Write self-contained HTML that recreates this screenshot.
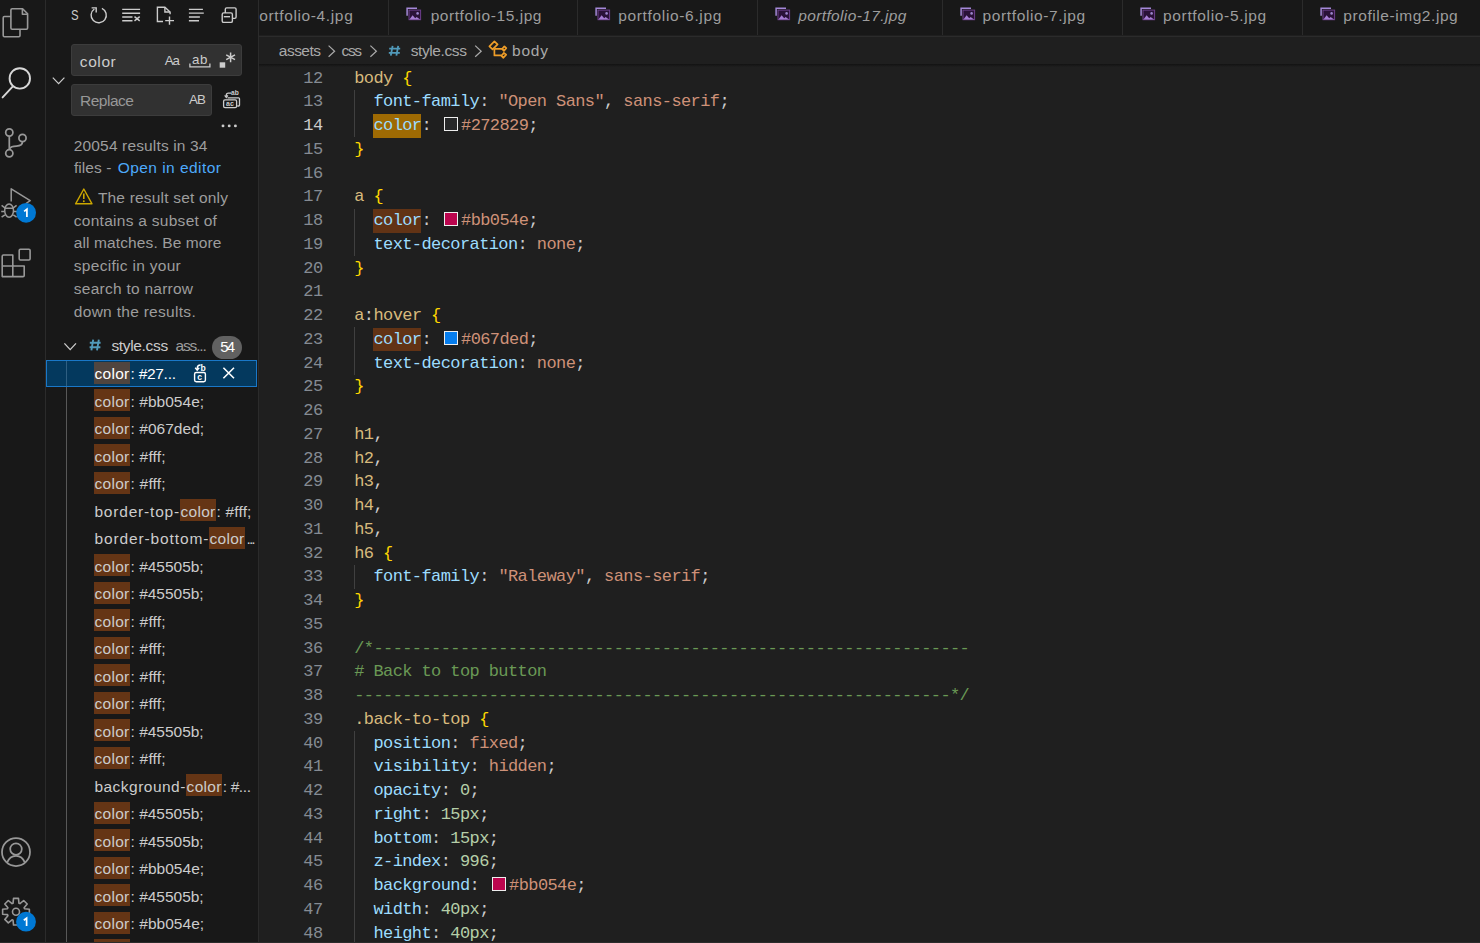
<!DOCTYPE html>
<html><head><meta charset="utf-8"><title>VS Code</title>
<style>
*{box-sizing:border-box;margin:0;padding:0}
html,body{width:1480px;height:943px;overflow:hidden;background:#1f1f1f}
body{position:relative;font-family:"Liberation Sans", sans-serif;color:#cccccc}
.a{position:absolute}
.t{position:absolute;white-space:pre;line-height:1}
.m{font-family:"Liberation Mono", monospace;font-size:17px;letter-spacing:-0.5917px}
svg{position:absolute;overflow:visible}
</style></head><body>

<div class="a" style="left:0;top:0;width:45px;height:943px;background:#181818"></div>
<div class="a" style="left:45px;top:0;width:1px;height:943px;background:#2b2b2b"></div>
<div class="a" style="left:46px;top:0;width:212px;height:943px;background:#181818"></div>
<div class="a" style="left:258px;top:0;width:1px;height:943px;background:#2b2b2b"></div>
<div class="a" style="left:259px;top:0;width:1221px;height:35px;background:#181818"></div>
<div class="a" style="left:259px;top:35.5px;width:1221px;height:1.2px;background:#2b2b2b"></div>
<div class="a" style="left:259px;top:36.7px;width:1221px;height:27.3px;background:#1f1f1f"></div>
<div class="a" style="left:259px;top:64px;width:1221px;height:3px;background:linear-gradient(#121212,#1f1f1f)"></div>
<svg width="46" height="943" style="left:0;top:0">
<g fill="none" stroke="#989898" stroke-width="1.6" stroke-linejoin="round">
  <path d="M10.9 16.5 H4.4 Q3.2 16.5 3.2 17.7 V35.6 Q3.2 36.8 4.4 36.8 H18.8 Q20 36.8 20 35.6 V29.4"/>
  <path d="M10.9 10 Q10.9 8.8 12.1 8.8 H22.6 L27.6 13.8 V28 Q27.6 29.2 26.4 29.2 H12.1 Q10.9 29.2 10.9 28 Z"/>
  <path d="M22.4 9 V14.2 H27.4"/>
</g>
<g fill="none" stroke="#d7d7d7" stroke-width="1.9">
  <circle cx="19.8" cy="78.4" r="10.2"/>
  <path d="M12.6 86.6 L2.6 97.4" stroke-linecap="round"/>
</g>
<g fill="none" stroke="#989898" stroke-width="1.75">
  <circle cx="9.3" cy="132.5" r="3.6"/>
  <circle cx="9.3" cy="153.3" r="3.6"/>
  <circle cx="22.5" cy="138" r="3.6"/>
  <path d="M9.3 136.1 V149.7"/>
  <path d="M22.5 141.6 Q22.5 146 16.5 146.1 Q11 146.2 9.5 148.8"/>
</g>
<g fill="none" stroke="#989898" stroke-width="1.5" stroke-linejoin="round">
  <path d="M11.2 201.4 V188.8 L30.2 200.6 L26 203.5"/>
  <ellipse cx="9.1" cy="210.6" rx="4.4" ry="6.6"/>
  <path d="M4.8 208.2 H13.4 M1.6 205.4 L4.9 207.8 M16.6 205.4 L13.3 207.8 M1.2 211.6 H4.7 M13.5 211.6 H17 M1.6 217.2 L4.9 214.8 M16.6 217.2 L13.3 214.8"/>
</g>
<circle cx="26.1" cy="212.8" r="9.9" fill="#0078d4"/>
<g fill="none" stroke="#989898" stroke-width="1.6" stroke-linejoin="round">
  <path d="M2.2 276.6 V256.2 Q2.2 255 3.4 255 H12.8 V266 H24.2 V275.4 Q24.2 276.6 23 276.6 H3.4 Q2.2 276.6 2.2 275.4 Z"/>
  <path d="M2.2 266 H12.8 V276.6"/>
  <rect x="19.2" y="249.2" width="10.9" height="10.8" rx="1.2"/>
</g>
<g fill="none" stroke="#989898" stroke-width="1.75">
  <circle cx="16" cy="852" r="14"/>
  <circle cx="16" cy="849.1" r="5.8"/>
  <path d="M7.2 862.4 Q9.8 855.8 16 855.8 Q22.2 855.8 24.8 862.4"/>
</g>
<g fill="none" stroke="#989898" stroke-width="1.6" stroke-linejoin="round">
  <path d="M13.07 903.19 L13.52 898.33 L18.48 898.33 L18.93 903.19 L19.95 903.61 L23.70 900.49 L27.21 904.00 L24.09 907.75 L24.51 908.77 L29.37 909.22 L29.37 914.18 L24.51 914.63 L24.09 915.65 L27.21 919.40 L23.70 922.91 L19.95 919.79 L18.93 920.21 L18.48 925.07 L13.52 925.07 L13.07 920.21 L12.05 919.79 L8.30 922.91 L4.79 919.40 L7.91 915.65 L7.49 914.63 L2.63 914.18 L2.63 909.22 L7.49 908.77 L7.91 907.75 L4.79 904.00 L8.30 900.49 L12.05 903.61 Z"/>
  <circle cx="16" cy="911.7" r="3.5"/>
</g>
<circle cx="26" cy="921.7" r="9.9" fill="#0078d4"/>
</svg>
<svg width="46" height="943" style="left:0;top:0"><path d="M26.9 217 V209.3 L24.1 211.4" fill="none" stroke="#ffffff" stroke-width="1.7" stroke-linejoin="miter"/></svg>
<svg width="46" height="943" style="left:0;top:0"><path d="M26.6 925.9 V918.2 L23.8 920.3" fill="none" stroke="#ffffff" stroke-width="1.7" stroke-linejoin="miter"/></svg>
<div class="t" style="left:70.6px;top:7.6px;font-size:14.6px;color:#cccccc;transform:scaleX(0.78);transform-origin:0 0">S</div>
<svg width="260" height="40" style="left:0;top:0">
<g fill="none" stroke="#cccccc" stroke-width="1.4" stroke-linecap="butt">
  <path d="M94.34 8.97 A7.6 7.6 0 1 0 101.9 8.31"/>
  <path d="M91.6 7.9 H96.2 V12.5" stroke-linejoin="miter"/>
  <path d="M122.2 9.4 H140.1 M122.2 13.2 H140.1 M122.2 17 H132.5 M122.2 20.7 H132.5 M134.5 16.6 L139.7 20.9 M139.7 16.6 L134.5 20.9"/>
  <path d="M163 21.5 H157.4 V7.2 H164.9 L170.1 12 V14.2"/>
  <path d="M164.9 7.4 V12 H170"/>
  <path d="M169.5 16.6 V24.8 M165.2 20.6 H174"/>
  <path d="M188.9 9.4 H202.9 M188.9 13.1 H203.8 M188.9 17 H199.9 M188.9 20.7 H199"/>
  <rect x="222.2" y="12.9" width="10.2" height="9.5" rx="1.5"/>
  <path d="M225.3 12.9 V9.3 Q225.3 7.9 226.7 7.9 H234.7 Q236.1 7.9 236.1 9.3 V17 Q236.1 18.4 234.7 18.4 H232.4"/>
  <path d="M223.8 16.7 H230"/>
</g>
</svg>
<div class="a" style="left:71px;top:44px;width:171px;height:32px;background:#313131;border:1px solid #3c3c3c;border-radius:3px"></div>
<div class="a" style="left:71px;top:84px;width:141px;height:32px;background:#313131;border:1px solid #3c3c3c;border-radius:3px"></div>
<div class="t" style="left:79.80px;top:54.08px;font-size:15.5px;color:#cccccc;letter-spacing:0.591px">color</div>
<div class="t" style="left:80.00px;top:93.28px;font-size:15.5px;color:#989898;letter-spacing:-0.481px">Replace</div>
<div class="t" style="left:164.80px;top:53.64px;font-size:13.3px;color:#cccccc;letter-spacing:-1.093px">Aa</div>
<div class="t" style="left:192.00px;top:52.64px;font-size:13.3px;color:#cccccc;letter-spacing:0.537px">ab</div>
<div class="t" style="left:189.10px;top:92.64px;font-size:13.3px;color:#cccccc;letter-spacing:-1.056px">AB</div>
<svg width="260" height="140" style="left:0;top:0">
<g fill="none" stroke="#cccccc" stroke-width="1.3">
  <path d="M189.9 63.4 V66.8 H209.9 V63.4"/>
  <path d="M52.8 77.6 L58.6 83.6 L64.4 77.6" stroke-width="1.2"/>
</g>
<rect x="219.7" y="62.3" width="5.5" height="5.4" fill="#cccccc"/>
<g stroke="#cccccc" stroke-width="1.5"><path d="M230.6 52.4 V62.2 M226.2 54.9 L235 59.7 M235 54.9 L226.2 59.7"/></g>
<g fill="none" stroke="#cccccc" stroke-width="1.3">
  <path d="M227.6 97.9 H238.6 Q239.5 97.9 239.5 98.8 V105.2 Q239.5 106 238.6 106 H237.2"/>
  <rect x="223.6" y="99.9" width="13" height="7.8" rx="1.4"/>
  <path d="M231 93.2 H228.4 Q226.3 93.2 226.3 95.3 V96.6"/>
  <path d="M224.7 95.4 L226.3 97.4 L227.9 95.4"/>
</g>
<text x="231" y="95.4" font-family="Liberation Sans" font-size="6.6" font-weight="bold" fill="#cccccc">ab</text>
<text x="226" y="106.3" font-family="Liberation Sans" font-size="7" font-weight="bold" fill="#cccccc">ac</text>
<g fill="#cccccc"><circle cx="223" cy="125.9" r="1.45"/><circle cx="229.2" cy="125.9" r="1.45"/><circle cx="235.4" cy="125.9" r="1.45"/></g>
</svg>
<div class="t" style="left:73.80px;top:137.88px;font-size:15.5px;color:#9d9d9d;letter-spacing:0.151px">20054 results in 34</div>
<div class="t" style="left:74.00px;top:160.48px;font-size:15.5px;color:#9d9d9d;letter-spacing:0.059px">files -</div>
<div class="t" style="left:117.70px;top:160.48px;font-size:15.5px;color:#4daafc;letter-spacing:0.458px">Open in editor</div>
<div class="t" style="left:97.90px;top:190.38px;font-size:15.5px;color:#9d9d9d;letter-spacing:0.192px">The result set only</div>
<div class="t" style="left:73.80px;top:212.78px;font-size:15.5px;color:#9d9d9d;letter-spacing:0.275px">contains a subset of</div>
<div class="t" style="left:73.80px;top:235.48px;font-size:15.5px;color:#9d9d9d;letter-spacing:0.109px">all matches. Be more</div>
<div class="t" style="left:73.80px;top:258.28px;font-size:15.5px;color:#9d9d9d;letter-spacing:0.298px">specific in your</div>
<div class="t" style="left:73.80px;top:281.08px;font-size:15.5px;color:#9d9d9d;letter-spacing:0.255px">search to narrow</div>
<div class="t" style="left:73.80px;top:303.78px;font-size:15.5px;color:#9d9d9d;letter-spacing:0.295px">down the results.</div>
<svg width="100" height="220" style="left:0;top:0">
<g fill="none" stroke="#cca700" stroke-width="1.4" stroke-linejoin="round">
  <path d="M83.8 189 L75.6 203.8 H92 Z"/>
</g>
<path d="M83.8 193.6 V199" stroke="#cca700" stroke-width="1.6"/>
<circle cx="83.8" cy="201.2" r="0.95" fill="#cca700"/>
</svg>
<svg width="260" height="400" style="left:0;top:0">
<path d="M64.4 343.4 L70.2 349.6 L76 343.4" fill="none" stroke="#cccccc" stroke-width="1.3"/>
<g stroke="#519aba" stroke-width="1.9" fill="none">
  <path d="M93.2 339.6 L91.4 350.4 M98.8 339.6 L97 350.4 M89.8 342.8 H100.6 M89.6 347.2 H100.4"/>
</g>
</svg>
<div class="t" style="left:111.40px;top:338.48px;font-size:15.5px;color:#cccccc;letter-spacing:-0.330px">style.css</div>
<div class="t" style="left:175.60px;top:338.48px;font-size:15.5px;color:#9d9d9d;letter-spacing:-1.189px">ass...</div>
<div class="a" style="left:212px;top:336px;width:30px;height:23px;border-radius:11.5px;background:#616161"></div>
<div class="t" style="left:220.20px;top:338.90px;font-size:15px;color:#ffffff;letter-spacing:-1.850px">54</div>
<div class="a" style="left:66px;top:386px;width:1px;height:557px;background:#585858"></div>
<div class="a" style="left:46px;top:360px;width:211.4px;height:27px;background:#04395e;border:1px solid #1a78c8"></div>
<div class="a" style="left:66px;top:361px;width:1px;height:25px;background:#2f5f82"></div>
<div class="a" style="left:94.00px;top:361.60px;width:35.8px;height:22px;background:#50453f"></div>
<div class="t" style="left:94.40px;top:366.28px;font-size:15.5px;color:#ffffff;letter-spacing:0.316px">color</div>
<div class="t" style="left:130.60px;top:366.28px;font-size:15.5px;color:#ffffff;letter-spacing:-0.290px">: #27...</div>
<div class="a" style="left:94.00px;top:389.10px;width:35.8px;height:22px;background:#653515"></div>
<div class="t" style="left:94.40px;top:393.78px;font-size:15.5px;color:#cccccc;letter-spacing:0.316px">color</div>
<div class="t" style="left:130.60px;top:393.78px;font-size:15.5px;color:#cccccc;letter-spacing:0.029px">: #bb054e;</div>
<div class="a" style="left:94.00px;top:416.60px;width:35.8px;height:22px;background:#653515"></div>
<div class="t" style="left:94.40px;top:421.28px;font-size:15.5px;color:#cccccc;letter-spacing:0.316px">color</div>
<div class="t" style="left:130.60px;top:421.28px;font-size:15.5px;color:#cccccc;letter-spacing:0.029px">: #067ded;</div>
<div class="a" style="left:94.00px;top:444.10px;width:35.8px;height:22px;background:#653515"></div>
<div class="t" style="left:94.40px;top:448.78px;font-size:15.5px;color:#cccccc;letter-spacing:0.316px">color</div>
<div class="t" style="left:130.60px;top:448.78px;font-size:15.5px;color:#cccccc;letter-spacing:0.189px">: #fff;</div>
<div class="a" style="left:94.00px;top:471.60px;width:35.8px;height:22px;background:#653515"></div>
<div class="t" style="left:94.40px;top:476.28px;font-size:15.5px;color:#cccccc;letter-spacing:0.316px">color</div>
<div class="t" style="left:130.60px;top:476.28px;font-size:15.5px;color:#cccccc;letter-spacing:0.189px">: #fff;</div>
<div class="a" style="left:180.00px;top:499.10px;width:35.8px;height:22px;background:#653515"></div>
<div class="t" style="left:94.40px;top:503.78px;font-size:15.5px;color:#cccccc;letter-spacing:0.815px">border-top-</div>
<div class="t" style="left:180.40px;top:503.78px;font-size:15.5px;color:#cccccc;letter-spacing:0.316px">color</div>
<div class="t" style="left:216.60px;top:503.78px;font-size:15.5px;color:#cccccc;letter-spacing:0.155px">: #fff;</div>
<div class="a" style="left:209.00px;top:526.60px;width:35.8px;height:22px;background:#653515"></div>
<div class="t" style="left:94.40px;top:531.28px;font-size:15.5px;color:#cccccc;letter-spacing:0.882px">border-bottom-</div>
<div class="t" style="left:209.40px;top:531.28px;font-size:15.5px;color:#cccccc;letter-spacing:0.316px">color</div>
<div class="t" style="left:246.40px;top:531.28px;font-size:15.5px;color:#cccccc;letter-spacing:-1.821px">...</div>
<div class="a" style="left:94.00px;top:554.10px;width:35.8px;height:22px;background:#653515"></div>
<div class="t" style="left:94.40px;top:558.78px;font-size:15.5px;color:#cccccc;letter-spacing:0.316px">color</div>
<div class="t" style="left:130.60px;top:558.78px;font-size:15.5px;color:#cccccc;letter-spacing:-0.026px">: #45505b;</div>
<div class="a" style="left:94.00px;top:581.60px;width:35.8px;height:22px;background:#653515"></div>
<div class="t" style="left:94.40px;top:586.28px;font-size:15.5px;color:#cccccc;letter-spacing:0.316px">color</div>
<div class="t" style="left:130.60px;top:586.28px;font-size:15.5px;color:#cccccc;letter-spacing:-0.026px">: #45505b;</div>
<div class="a" style="left:94.00px;top:609.10px;width:35.8px;height:22px;background:#653515"></div>
<div class="t" style="left:94.40px;top:613.78px;font-size:15.5px;color:#cccccc;letter-spacing:0.316px">color</div>
<div class="t" style="left:130.60px;top:613.78px;font-size:15.5px;color:#cccccc;letter-spacing:0.189px">: #fff;</div>
<div class="a" style="left:94.00px;top:636.60px;width:35.8px;height:22px;background:#653515"></div>
<div class="t" style="left:94.40px;top:641.28px;font-size:15.5px;color:#cccccc;letter-spacing:0.316px">color</div>
<div class="t" style="left:130.60px;top:641.28px;font-size:15.5px;color:#cccccc;letter-spacing:0.189px">: #fff;</div>
<div class="a" style="left:94.00px;top:664.10px;width:35.8px;height:22px;background:#653515"></div>
<div class="t" style="left:94.40px;top:668.78px;font-size:15.5px;color:#cccccc;letter-spacing:0.316px">color</div>
<div class="t" style="left:130.60px;top:668.78px;font-size:15.5px;color:#cccccc;letter-spacing:0.189px">: #fff;</div>
<div class="a" style="left:94.00px;top:691.60px;width:35.8px;height:22px;background:#653515"></div>
<div class="t" style="left:94.40px;top:696.28px;font-size:15.5px;color:#cccccc;letter-spacing:0.316px">color</div>
<div class="t" style="left:130.60px;top:696.28px;font-size:15.5px;color:#cccccc;letter-spacing:0.189px">: #fff;</div>
<div class="a" style="left:94.00px;top:719.10px;width:35.8px;height:22px;background:#653515"></div>
<div class="t" style="left:94.40px;top:723.78px;font-size:15.5px;color:#cccccc;letter-spacing:0.316px">color</div>
<div class="t" style="left:130.60px;top:723.78px;font-size:15.5px;color:#cccccc;letter-spacing:-0.026px">: #45505b;</div>
<div class="a" style="left:94.00px;top:746.60px;width:35.8px;height:22px;background:#653515"></div>
<div class="t" style="left:94.40px;top:751.28px;font-size:15.5px;color:#cccccc;letter-spacing:0.316px">color</div>
<div class="t" style="left:130.60px;top:751.28px;font-size:15.5px;color:#cccccc;letter-spacing:0.189px">: #fff;</div>
<div class="a" style="left:186.20px;top:774.10px;width:35.8px;height:22px;background:#653515"></div>
<div class="t" style="left:94.40px;top:778.78px;font-size:15.5px;color:#cccccc;letter-spacing:0.482px">background-</div>
<div class="t" style="left:186.60px;top:778.78px;font-size:15.5px;color:#cccccc;letter-spacing:0.316px">color</div>
<div class="t" style="left:222.80px;top:778.78px;font-size:15.5px;color:#cccccc;letter-spacing:-0.390px">: #...</div>
<div class="a" style="left:94.00px;top:801.60px;width:35.8px;height:22px;background:#653515"></div>
<div class="t" style="left:94.40px;top:806.28px;font-size:15.5px;color:#cccccc;letter-spacing:0.316px">color</div>
<div class="t" style="left:130.60px;top:806.28px;font-size:15.5px;color:#cccccc;letter-spacing:-0.026px">: #45505b;</div>
<div class="a" style="left:94.00px;top:829.10px;width:35.8px;height:22px;background:#653515"></div>
<div class="t" style="left:94.40px;top:833.78px;font-size:15.5px;color:#cccccc;letter-spacing:0.316px">color</div>
<div class="t" style="left:130.60px;top:833.78px;font-size:15.5px;color:#cccccc;letter-spacing:-0.026px">: #45505b;</div>
<div class="a" style="left:94.00px;top:856.60px;width:35.8px;height:22px;background:#653515"></div>
<div class="t" style="left:94.40px;top:861.28px;font-size:15.5px;color:#cccccc;letter-spacing:0.316px">color</div>
<div class="t" style="left:130.60px;top:861.28px;font-size:15.5px;color:#cccccc;letter-spacing:0.029px">: #bb054e;</div>
<div class="a" style="left:94.00px;top:884.10px;width:35.8px;height:22px;background:#653515"></div>
<div class="t" style="left:94.40px;top:888.78px;font-size:15.5px;color:#cccccc;letter-spacing:0.316px">color</div>
<div class="t" style="left:130.60px;top:888.78px;font-size:15.5px;color:#cccccc;letter-spacing:-0.026px">: #45505b;</div>
<div class="a" style="left:94.00px;top:911.60px;width:35.8px;height:22px;background:#653515"></div>
<div class="t" style="left:94.40px;top:916.28px;font-size:15.5px;color:#cccccc;letter-spacing:0.316px">color</div>
<div class="t" style="left:130.60px;top:916.28px;font-size:15.5px;color:#cccccc;letter-spacing:0.029px">: #bb054e;</div>
<div class="a" style="left:94.00px;top:939.10px;width:35.8px;height:22px;background:#653515"></div>
<div class="t" style="left:94.40px;top:943.78px;font-size:15.5px;color:#cccccc;letter-spacing:0.316px">color</div>
<div class="t" style="left:130.60px;top:943.78px;font-size:15.5px;color:#cccccc;letter-spacing:0.189px">: #fff;</div>
<svg width="260" height="400" style="left:0;top:0">
<g fill="none" stroke="#ffffff" stroke-width="1.4">
  <rect x="194.6" y="372.5" width="10.8" height="9.2" rx="1.6"/>
  <path d="M200.6 365 Q197.2 365 197.2 368.4 V369.6"/>
  <path d="M195.2 367.8 L197.2 370.2 L199.2 367.8"/>
  <path d="M223.4 367.8 L234 378.2 M234 367.8 L223.4 378.2" stroke-width="1.6"/>
</g>
<text x="200.6" y="370.6" font-family="Liberation Sans" font-size="8.6" font-weight="bold" fill="#ffffff">b</text>
<text x="197.2" y="379.6" font-family="Liberation Sans" font-size="8.6" font-weight="bold" fill="#ffffff">c</text>
</svg>
<div class="a" style="left:388.1px;top:0;width:1px;height:35px;background:#2b2b2b"></div>
<div class="a" style="left:577.2px;top:0;width:1px;height:35px;background:#2b2b2b"></div>
<div class="a" style="left:756.9px;top:0;width:1px;height:35px;background:#2b2b2b"></div>
<div class="a" style="left:941.5px;top:0;width:1px;height:35px;background:#2b2b2b"></div>
<div class="a" style="left:1122.1px;top:0;width:1px;height:35px;background:#2b2b2b"></div>
<div class="a" style="left:1301.7px;top:0;width:1px;height:35px;background:#2b2b2b"></div>
<div class="t" style="left:259.20px;top:7.88px;font-size:15.5px;color:#9d9d9d;letter-spacing:0.636px">ortfolio-4.jpg</div>
<div class="t" style="left:430.70px;top:7.88px;font-size:15.5px;color:#9d9d9d;letter-spacing:0.551px">portfolio-15.jpg</div>
<svg width="18" height="16" style="left:406.4px;top:7px">
<path d="M1.1 8.8 V1.3 H11" fill="none" stroke="#a488d8" stroke-width="1.5"/>
<rect x="3" y="3.1" width="11.6" height="9.6" fill="#2a1238" stroke="#6d3f8c" stroke-width="1"/>
<path d="M3.4 12.6 L6.6 8.2 L9.2 11.2 L10.6 9.9 L14.2 12.6 Z" fill="#a77ed4"/>
<circle cx="11.6" cy="6.4" r="1.3" fill="#9c86cc"/>
</svg>
<div class="t" style="left:618.20px;top:7.88px;font-size:15.5px;color:#9d9d9d;letter-spacing:0.662px">portfolio-6.jpg</div>
<svg width="18" height="16" style="left:594.9px;top:7px">
<path d="M1.1 8.8 V1.3 H11" fill="none" stroke="#a488d8" stroke-width="1.5"/>
<rect x="3" y="3.1" width="11.6" height="9.6" fill="#2a1238" stroke="#6d3f8c" stroke-width="1"/>
<path d="M3.4 12.6 L6.6 8.2 L9.2 11.2 L10.6 9.9 L14.2 12.6 Z" fill="#a77ed4"/>
<circle cx="11.6" cy="6.4" r="1.3" fill="#9c86cc"/>
</svg>
<div class="t" style="left:798.19px;top:7.88px;font-size:15.5px;color:#9d9d9d;font-style:italic;letter-spacing:0.372px">portfolio-17.jpg</div>
<svg width="18" height="16" style="left:774.5px;top:7px">
<path d="M1.1 8.8 V1.3 H11" fill="none" stroke="#a488d8" stroke-width="1.5"/>
<rect x="3" y="3.1" width="11.6" height="9.6" fill="#2a1238" stroke="#6d3f8c" stroke-width="1"/>
<path d="M3.4 12.6 L6.6 8.2 L9.2 11.2 L10.6 9.9 L14.2 12.6 Z" fill="#a77ed4"/>
<circle cx="11.6" cy="6.4" r="1.3" fill="#9c86cc"/>
</svg>
<div class="t" style="left:982.50px;top:7.88px;font-size:15.5px;color:#9d9d9d;letter-spacing:0.626px">portfolio-7.jpg</div>
<svg width="18" height="16" style="left:959.5px;top:7px">
<path d="M1.1 8.8 V1.3 H11" fill="none" stroke="#a488d8" stroke-width="1.5"/>
<rect x="3" y="3.1" width="11.6" height="9.6" fill="#2a1238" stroke="#6d3f8c" stroke-width="1"/>
<path d="M3.4 12.6 L6.6 8.2 L9.2 11.2 L10.6 9.9 L14.2 12.6 Z" fill="#a77ed4"/>
<circle cx="11.6" cy="6.4" r="1.3" fill="#9c86cc"/>
</svg>
<div class="t" style="left:1163.00px;top:7.88px;font-size:15.5px;color:#9d9d9d;letter-spacing:0.662px">portfolio-5.jpg</div>
<svg width="18" height="16" style="left:1139.7px;top:7px">
<path d="M1.1 8.8 V1.3 H11" fill="none" stroke="#a488d8" stroke-width="1.5"/>
<rect x="3" y="3.1" width="11.6" height="9.6" fill="#2a1238" stroke="#6d3f8c" stroke-width="1"/>
<path d="M3.4 12.6 L6.6 8.2 L9.2 11.2 L10.6 9.9 L14.2 12.6 Z" fill="#a77ed4"/>
<circle cx="11.6" cy="6.4" r="1.3" fill="#9c86cc"/>
</svg>
<div class="t" style="left:1343.30px;top:7.88px;font-size:15.5px;color:#9d9d9d;letter-spacing:0.564px">profile-img2.jpg</div>
<svg width="18" height="16" style="left:1320.0px;top:7px">
<path d="M1.1 8.8 V1.3 H11" fill="none" stroke="#a488d8" stroke-width="1.5"/>
<rect x="3" y="3.1" width="11.6" height="9.6" fill="#2a1238" stroke="#6d3f8c" stroke-width="1"/>
<path d="M3.4 12.6 L6.6 8.2 L9.2 11.2 L10.6 9.9 L14.2 12.6 Z" fill="#a77ed4"/>
<circle cx="11.6" cy="6.4" r="1.3" fill="#9c86cc"/>
</svg>
<div class="t" style="left:278.80px;top:43.48px;font-size:15.5px;color:#a9a9a9;letter-spacing:-0.519px">assets</div>
<div class="t" style="left:341.50px;top:43.48px;font-size:15.5px;color:#a9a9a9;letter-spacing:-1.325px">css</div>
<div class="t" style="left:410.70px;top:43.48px;font-size:15.5px;color:#a9a9a9;letter-spacing:-0.393px">style.css</div>
<div class="t" style="left:512.00px;top:43.48px;font-size:15.5px;color:#a9a9a9;letter-spacing:0.755px">body</div>
<svg width="560" height="70" style="left:0;top:0">
<g fill="none" stroke="#a9a9a9" stroke-width="1.2">
  <path d="M328.6 45.6 L334.6 51.2 L328.6 56.8"/>
  <path d="M370.4 45.6 L376.4 51.2 L370.4 56.8"/>
  <path d="M475.2 45.6 L481.2 51.2 L475.2 56.8"/>
</g>
<g stroke="#519aba" stroke-width="1.8" fill="none">
  <path d="M392.6 45.8 L390.8 55.6 M398.2 45.8 L396.4 55.6 M389.2 48.6 H400.2 M388.8 52.8 H399.8"/>
</g>
<g fill="none" stroke="#ee9d28" stroke-width="1.7" stroke-linejoin="round">
  <path d="M489.4 46.4 L494.4 41.4 L497.6 44.4 L492.6 49.4 Z"/>
  <path d="M502.2 48.9 L504.4 46.3 L506.3 48.2 L503.9 50.9 Z"/>
  <path d="M501.5 55.8 L503.9 52.9 L506.2 54.6 L503.4 57.8 Z"/>
  <path d="M494.3 48.9 H502 M494.4 49 V55.4 H501.6"/>
</g>
</svg>
<div class="t m" style="left:281px;top:66.70px;width:41.5px;height:23.75px;line-height:23.75px;text-align:right;color:#858b93">12</div>
<div class="t m" style="left:354.2px;top:66.70px;height:23.75px;line-height:23.75px"><span style="color:#d7ba7d">body </span><span style="color:#ffd700">{</span></div>
<div class="t m" style="left:281px;top:90.45px;width:41.5px;height:23.75px;line-height:23.75px;text-align:right;color:#858b93">13</div>
<div class="t m" style="left:354.2px;top:90.45px;height:23.75px;line-height:23.75px"><span style="color:#cccccc">  </span><span style="color:#9cdcfe">font-family</span><span style="color:#cccccc">: </span><span style="color:#ce9178">&quot;Open Sans&quot;</span><span style="color:#cccccc">, </span><span style="color:#ce9178">sans-serif</span><span style="color:#cccccc">;</span></div>
<div class="t m" style="left:281px;top:114.20px;width:41.5px;height:23.75px;line-height:23.75px;text-align:right;color:#cccccc">14</div>
<div class="a" style="left:373.42px;top:113.80px;width:48.05px;height:23.9px;background:#9e6a03"></div>
<div class="a" style="left:444.19px;top:116.80px;width:14.2px;height:14.2px;background:#272829;border:1.4px solid #eeeeee"></div>
<div class="t m" style="left:354.2px;top:114.20px;height:23.75px;line-height:23.75px"><span style="color:#cccccc">  </span><span style="color:#9cdcfe">color</span><span style="color:#cccccc">: </span><span style="display:inline-block;width:20.30px"></span><span style="color:#ce9178">#272829</span><span style="color:#cccccc">;</span></div>
<div class="t m" style="left:281px;top:137.95px;width:41.5px;height:23.75px;line-height:23.75px;text-align:right;color:#858b93">15</div>
<div class="t m" style="left:354.2px;top:137.95px;height:23.75px;line-height:23.75px"><span style="color:#ffd700">}</span></div>
<div class="t m" style="left:281px;top:161.70px;width:41.5px;height:23.75px;line-height:23.75px;text-align:right;color:#858b93">16</div>
<div class="t m" style="left:281px;top:185.45px;width:41.5px;height:23.75px;line-height:23.75px;text-align:right;color:#858b93">17</div>
<div class="t m" style="left:354.2px;top:185.45px;height:23.75px;line-height:23.75px"><span style="color:#d7ba7d">a </span><span style="color:#ffd700">{</span></div>
<div class="t m" style="left:281px;top:209.20px;width:41.5px;height:23.75px;line-height:23.75px;text-align:right;color:#858b93">18</div>
<div class="a" style="left:373.42px;top:208.80px;width:48.05px;height:23.9px;background:#623315"></div>
<div class="a" style="left:444.19px;top:211.80px;width:14.2px;height:14.2px;background:#bb054e;border:1.4px solid #eeeeee"></div>
<div class="t m" style="left:354.2px;top:209.20px;height:23.75px;line-height:23.75px"><span style="color:#cccccc">  </span><span style="color:#9cdcfe">color</span><span style="color:#cccccc">: </span><span style="display:inline-block;width:20.30px"></span><span style="color:#ce9178">#bb054e</span><span style="color:#cccccc">;</span></div>
<div class="t m" style="left:281px;top:232.95px;width:41.5px;height:23.75px;line-height:23.75px;text-align:right;color:#858b93">19</div>
<div class="t m" style="left:354.2px;top:232.95px;height:23.75px;line-height:23.75px"><span style="color:#cccccc">  </span><span style="color:#9cdcfe">text-decoration</span><span style="color:#cccccc">: </span><span style="color:#ce9178">none</span><span style="color:#cccccc">;</span></div>
<div class="t m" style="left:281px;top:256.70px;width:41.5px;height:23.75px;line-height:23.75px;text-align:right;color:#858b93">20</div>
<div class="t m" style="left:354.2px;top:256.70px;height:23.75px;line-height:23.75px"><span style="color:#ffd700">}</span></div>
<div class="t m" style="left:281px;top:280.45px;width:41.5px;height:23.75px;line-height:23.75px;text-align:right;color:#858b93">21</div>
<div class="t m" style="left:281px;top:304.20px;width:41.5px;height:23.75px;line-height:23.75px;text-align:right;color:#858b93">22</div>
<div class="t m" style="left:354.2px;top:304.20px;height:23.75px;line-height:23.75px"><span style="color:#d7ba7d">a</span><span style="color:#cccccc">:</span><span style="color:#d7ba7d">hover </span><span style="color:#ffd700">{</span></div>
<div class="t m" style="left:281px;top:327.95px;width:41.5px;height:23.75px;line-height:23.75px;text-align:right;color:#858b93">23</div>
<div class="a" style="left:373.42px;top:327.55px;width:48.05px;height:23.9px;background:#623315"></div>
<div class="a" style="left:444.19px;top:330.55px;width:14.2px;height:14.2px;background:#067ded;border:1.4px solid #eeeeee"></div>
<div class="t m" style="left:354.2px;top:327.95px;height:23.75px;line-height:23.75px"><span style="color:#cccccc">  </span><span style="color:#9cdcfe">color</span><span style="color:#cccccc">: </span><span style="display:inline-block;width:20.30px"></span><span style="color:#ce9178">#067ded</span><span style="color:#cccccc">;</span></div>
<div class="t m" style="left:281px;top:351.70px;width:41.5px;height:23.75px;line-height:23.75px;text-align:right;color:#858b93">24</div>
<div class="t m" style="left:354.2px;top:351.70px;height:23.75px;line-height:23.75px"><span style="color:#cccccc">  </span><span style="color:#9cdcfe">text-decoration</span><span style="color:#cccccc">: </span><span style="color:#ce9178">none</span><span style="color:#cccccc">;</span></div>
<div class="t m" style="left:281px;top:375.45px;width:41.5px;height:23.75px;line-height:23.75px;text-align:right;color:#858b93">25</div>
<div class="t m" style="left:354.2px;top:375.45px;height:23.75px;line-height:23.75px"><span style="color:#ffd700">}</span></div>
<div class="t m" style="left:281px;top:399.20px;width:41.5px;height:23.75px;line-height:23.75px;text-align:right;color:#858b93">26</div>
<div class="t m" style="left:281px;top:422.95px;width:41.5px;height:23.75px;line-height:23.75px;text-align:right;color:#858b93">27</div>
<div class="t m" style="left:354.2px;top:422.95px;height:23.75px;line-height:23.75px"><span style="color:#d7ba7d">h1</span><span style="color:#cccccc">,</span></div>
<div class="t m" style="left:281px;top:446.70px;width:41.5px;height:23.75px;line-height:23.75px;text-align:right;color:#858b93">28</div>
<div class="t m" style="left:354.2px;top:446.70px;height:23.75px;line-height:23.75px"><span style="color:#d7ba7d">h2</span><span style="color:#cccccc">,</span></div>
<div class="t m" style="left:281px;top:470.45px;width:41.5px;height:23.75px;line-height:23.75px;text-align:right;color:#858b93">29</div>
<div class="t m" style="left:354.2px;top:470.45px;height:23.75px;line-height:23.75px"><span style="color:#d7ba7d">h3</span><span style="color:#cccccc">,</span></div>
<div class="t m" style="left:281px;top:494.20px;width:41.5px;height:23.75px;line-height:23.75px;text-align:right;color:#858b93">30</div>
<div class="t m" style="left:354.2px;top:494.20px;height:23.75px;line-height:23.75px"><span style="color:#d7ba7d">h4</span><span style="color:#cccccc">,</span></div>
<div class="t m" style="left:281px;top:517.95px;width:41.5px;height:23.75px;line-height:23.75px;text-align:right;color:#858b93">31</div>
<div class="t m" style="left:354.2px;top:517.95px;height:23.75px;line-height:23.75px"><span style="color:#d7ba7d">h5</span><span style="color:#cccccc">,</span></div>
<div class="t m" style="left:281px;top:541.70px;width:41.5px;height:23.75px;line-height:23.75px;text-align:right;color:#858b93">32</div>
<div class="t m" style="left:354.2px;top:541.70px;height:23.75px;line-height:23.75px"><span style="color:#d7ba7d">h6 </span><span style="color:#ffd700">{</span></div>
<div class="t m" style="left:281px;top:565.45px;width:41.5px;height:23.75px;line-height:23.75px;text-align:right;color:#858b93">33</div>
<div class="t m" style="left:354.2px;top:565.45px;height:23.75px;line-height:23.75px"><span style="color:#cccccc">  </span><span style="color:#9cdcfe">font-family</span><span style="color:#cccccc">: </span><span style="color:#ce9178">&quot;Raleway&quot;</span><span style="color:#cccccc">, </span><span style="color:#ce9178">sans-serif</span><span style="color:#cccccc">;</span></div>
<div class="t m" style="left:281px;top:589.20px;width:41.5px;height:23.75px;line-height:23.75px;text-align:right;color:#858b93">34</div>
<div class="t m" style="left:354.2px;top:589.20px;height:23.75px;line-height:23.75px"><span style="color:#ffd700">}</span></div>
<div class="t m" style="left:281px;top:612.95px;width:41.5px;height:23.75px;line-height:23.75px;text-align:right;color:#858b93">35</div>
<div class="t m" style="left:281px;top:636.70px;width:41.5px;height:23.75px;line-height:23.75px;text-align:right;color:#858b93">36</div>
<div class="t m" style="left:354.2px;top:636.70px;height:23.75px;line-height:23.75px"><span style="color:#6a9955">/*--------------------------------------------------------------</span></div>
<div class="t m" style="left:281px;top:660.45px;width:41.5px;height:23.75px;line-height:23.75px;text-align:right;color:#858b93">37</div>
<div class="t m" style="left:354.2px;top:660.45px;height:23.75px;line-height:23.75px"><span style="color:#6a9955"># Back to top button</span></div>
<div class="t m" style="left:281px;top:684.20px;width:41.5px;height:23.75px;line-height:23.75px;text-align:right;color:#858b93">38</div>
<div class="t m" style="left:354.2px;top:684.20px;height:23.75px;line-height:23.75px"><span style="color:#6a9955">--------------------------------------------------------------*/</span></div>
<div class="t m" style="left:281px;top:707.95px;width:41.5px;height:23.75px;line-height:23.75px;text-align:right;color:#858b93">39</div>
<div class="t m" style="left:354.2px;top:707.95px;height:23.75px;line-height:23.75px"><span style="color:#d7ba7d">.back-to-top </span><span style="color:#ffd700">{</span></div>
<div class="t m" style="left:281px;top:731.70px;width:41.5px;height:23.75px;line-height:23.75px;text-align:right;color:#858b93">40</div>
<div class="t m" style="left:354.2px;top:731.70px;height:23.75px;line-height:23.75px"><span style="color:#cccccc">  </span><span style="color:#9cdcfe">position</span><span style="color:#cccccc">: </span><span style="color:#ce9178">fixed</span><span style="color:#cccccc">;</span></div>
<div class="t m" style="left:281px;top:755.45px;width:41.5px;height:23.75px;line-height:23.75px;text-align:right;color:#858b93">41</div>
<div class="t m" style="left:354.2px;top:755.45px;height:23.75px;line-height:23.75px"><span style="color:#cccccc">  </span><span style="color:#9cdcfe">visibility</span><span style="color:#cccccc">: </span><span style="color:#ce9178">hidden</span><span style="color:#cccccc">;</span></div>
<div class="t m" style="left:281px;top:779.20px;width:41.5px;height:23.75px;line-height:23.75px;text-align:right;color:#858b93">42</div>
<div class="t m" style="left:354.2px;top:779.20px;height:23.75px;line-height:23.75px"><span style="color:#cccccc">  </span><span style="color:#9cdcfe">opacity</span><span style="color:#cccccc">: </span><span style="color:#b5cea8">0</span><span style="color:#cccccc">;</span></div>
<div class="t m" style="left:281px;top:802.95px;width:41.5px;height:23.75px;line-height:23.75px;text-align:right;color:#858b93">43</div>
<div class="t m" style="left:354.2px;top:802.95px;height:23.75px;line-height:23.75px"><span style="color:#cccccc">  </span><span style="color:#9cdcfe">right</span><span style="color:#cccccc">: </span><span style="color:#b5cea8">15px</span><span style="color:#cccccc">;</span></div>
<div class="t m" style="left:281px;top:826.70px;width:41.5px;height:23.75px;line-height:23.75px;text-align:right;color:#858b93">44</div>
<div class="t m" style="left:354.2px;top:826.70px;height:23.75px;line-height:23.75px"><span style="color:#cccccc">  </span><span style="color:#9cdcfe">bottom</span><span style="color:#cccccc">: </span><span style="color:#b5cea8">15px</span><span style="color:#cccccc">;</span></div>
<div class="t m" style="left:281px;top:850.45px;width:41.5px;height:23.75px;line-height:23.75px;text-align:right;color:#858b93">45</div>
<div class="t m" style="left:354.2px;top:850.45px;height:23.75px;line-height:23.75px"><span style="color:#cccccc">  </span><span style="color:#9cdcfe">z-index</span><span style="color:#cccccc">: </span><span style="color:#b5cea8">996</span><span style="color:#cccccc">;</span></div>
<div class="t m" style="left:281px;top:874.20px;width:41.5px;height:23.75px;line-height:23.75px;text-align:right;color:#858b93">46</div>
<div class="a" style="left:492.24px;top:876.80px;width:14.2px;height:14.2px;background:#bb054e;border:1.4px solid #eeeeee"></div>
<div class="t m" style="left:354.2px;top:874.20px;height:23.75px;line-height:23.75px"><span style="color:#cccccc">  </span><span style="color:#9cdcfe">background</span><span style="color:#cccccc">: </span><span style="display:inline-block;width:20.30px"></span><span style="color:#ce9178">#bb054e</span><span style="color:#cccccc">;</span></div>
<div class="t m" style="left:281px;top:897.95px;width:41.5px;height:23.75px;line-height:23.75px;text-align:right;color:#858b93">47</div>
<div class="t m" style="left:354.2px;top:897.95px;height:23.75px;line-height:23.75px"><span style="color:#cccccc">  </span><span style="color:#9cdcfe">width</span><span style="color:#cccccc">: </span><span style="color:#b5cea8">40px</span><span style="color:#cccccc">;</span></div>
<div class="t m" style="left:281px;top:921.70px;width:41.5px;height:23.75px;line-height:23.75px;text-align:right;color:#858b93">48</div>
<div class="t m" style="left:354.2px;top:921.70px;height:23.75px;line-height:23.75px"><span style="color:#cccccc">  </span><span style="color:#9cdcfe">height</span><span style="color:#cccccc">: </span><span style="color:#b5cea8">40px</span><span style="color:#cccccc">;</span></div>
<div class="t m" style="left:281px;top:945.45px;width:41.5px;height:23.75px;line-height:23.75px;text-align:right;color:#858b93">49</div>
<div class="a" style="left:354.2px;top:89.85px;width:1px;height:47.50px;background:#404040"></div>
<div class="a" style="left:354.2px;top:208.60px;width:1px;height:47.50px;background:#404040"></div>
<div class="a" style="left:354.2px;top:327.35px;width:1px;height:47.50px;background:#404040"></div>
<div class="a" style="left:354.2px;top:564.85px;width:1px;height:23.75px;background:#404040"></div>
<div class="a" style="left:354.2px;top:731.10px;width:1px;height:237.50px;background:#404040"></div>
<div class="a" style="left:0;top:942px;width:1480px;height:1px;background:#2b2b2b"></div>
</body></html>
